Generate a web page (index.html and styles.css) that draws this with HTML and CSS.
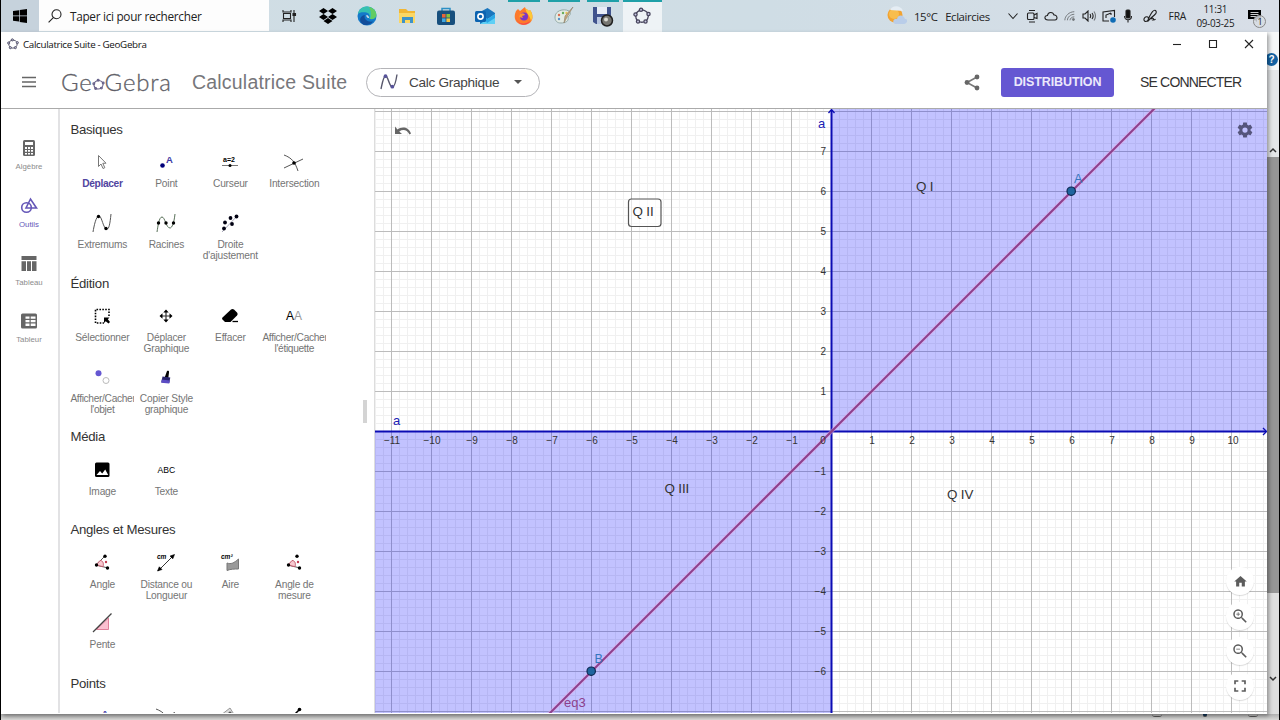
FILE: index.html
```
<!DOCTYPE html>
<html lang="fr">
  <head>
    <meta charset="utf-8">
    <title>Calculatrice Suite - GeoGebra</title>
    <link rel="stylesheet" href="styles.css">
  </head>

  <body>
    <div class="taskbar">
      <div class="start">
        <svg width="14" height="14" viewBox="0 0 14 14"><path d="M0 2l6-.8v5.3H0zM6.7 1.1L14 0v6.5H6.700zM0 7.200h6v5.300L0 11.700zM6.700 7.200H14V14l-7.300-1.100z"/></svg>
      </div>
      <div class="search">
        <svg width="14" height="14" viewBox="0 0 14 14" class="line"><circle cx="8.500" cy="5.300" r="4.500"/><path d="M5.300 8.700L.6 13.400"/></svg>
        <span>Taper ici pour rechercher</span>
      </div>

      <div class="apps">
        <div class="app">
          <svg width="16" height="16" viewBox="0 0 16 16" class="line"><path d="M2 2v2h8V2M2 14v-2h8v2M2.500 5.500h7v5h-7zM13 2v12"/><path d="M12 5.500h2.500v2H12z" fill="#222"/></svg>
        </div>
        <div class="app">
          <svg width="20" height="18" viewBox="0 0 20 18"><path d="M5.500 1L10 4 5.500 7 1 4zM14.500 1L19 4l-4.500 3L10 4zM5.500 7L10 10l-4.500 3L1 10zM14.500 7L19 10l-4.500 3L10 10zM5.500 14L10 11l4.500 3-4.500 3z"/></svg>
        </div>
        <div class="app">
          <svg width="20" height="20" viewBox="0 0 20 20">
            <circle cx="10" cy="10" r="9.500" fill="#1479c9"/>
            <path d="M1 8C2 2 7 .4 10 .5c6 .1 9.500 4.500 9.400 8.500-.2 4-5 5-7.400 3.500 2-3 0-6-4-6.300C4.500 6 2 6.500 1 8z" fill="#35c1b1"/>
            <path d="M12 1c5 1 7.500 5 7.300 8-.2 3.500-4 4.500-6.300 3.800 2-3 1-8-1-11.800z" fill="#62cc62"/>
            <path d="M8 9c-1.500 3 1 7.500 8 6.500-3 4-9 5-12 1-2-3-.5-7 4-7.500z" fill="#124e9b"/>
            <path d="M12 12c-1 0-3-.5-2.600-3 1.500 0 2.900 1.500 2.600 3z" fill="#d3dee4"/>
          </svg>
        </div>
        <div class="app">
          <svg width="20" height="18" viewBox="0 0 20 18"><path d="M2 2h7l2 2h7v12H2z" fill="#f2b632"/><path d="M2 6h16v10H2z" fill="#fbd764"/><path d="M5 10h11v6h-3v-3H8v3H5z" fill="#3f93c8"/></svg>
        </div>
        <div class="app">
          <svg width="20" height="20" viewBox="0 0 20 20"><path d="M6 5V2.500h8V5" fill="none" stroke="#2b8fc4" stroke-width="1.500"/><rect x="1" y="4.500" width="18" height="14.500" rx="2" fill="#174f7d"/><path d="M6 8h3.600v3.600H6z" fill="#e7643b"/><path d="M10.400 8H14v3.600h-3.600z" fill="#8cbf3b"/><path d="M6 12.400h3.600V16H6z" fill="#42a8e0"/><path d="M10.400 12.400H14V16h-3.600z" fill="#f5c445"/></svg>
        </div>
        <div class="app">
          <svg width="20" height="18" viewBox="0 0 20 18"><path d="M5 5l7.500-4L20 6v11H5z" fill="#1a75bd"/><path d="M5 17L20 7v10z" fill="#5fd0f5"/><path d="M8 9l5 3 7-5v4l-8 5z" fill="#2aa6e6"/><rect y="4" width="11" height="11" rx="1.500" fill="#0b63b0"/><circle cx="5.500" cy="9.500" r="2.600" fill="none" stroke="#fff" stroke-width="1.600"/></svg>
        </div>
        <div class="app running">
          <svg width="20" height="20" viewBox="0 0 20 20"><path d="M2 5l2-2 2 2c2-1 3-3 5-4 0 2 2 2 4 4l1-1c4 5 4 14-6 15C1 19-1 11 2 5z" fill="#fd7a2c"/><path d="M11 1c0 2 2 2 4 4l1-1c3 4 3 8 1 11-1-6-5-7-6-14z" fill="#fdc936"/><path d="M2 9c0 9 8 11 14 6-2 5-14 6-14-6z" fill="#f3335b"/><circle cx="10" cy="10.500" r="4" fill="#7b36c6"/><path d="M6 8c3-2 5 0 5 1l-3 1 1 2-4-1z" fill="#fd9a2c"/></svg>
        </div>
        <div class="app running">
          <svg width="20" height="20" viewBox="0 0 20 20"><path d="M1 11c0-6 8-9 14-6 3 3 0 5-1 6 1 4-2 6-7 6-4 0-6-2-6-6z" fill="#e3ebe5" stroke="#93aaa7"/><circle cx="5" cy="9" r="1.200" fill="#dc6c50"/><circle cx="9" cy="7" r="1.200" fill="#67ad59"/><circle cx="5" cy="13" r="1.200" fill="#5790c9"/><circle cx="12.500" cy="7" r="1.200" fill="#ecc553"/><path d="M19 1l-6 10-3 6 1-7z" fill="#c8a87b" stroke="#8c7c67" stroke-width=".6"/></svg>
        </div>
        <div class="app running">
          <svg width="22" height="21" viewBox="0 0 22 21"><path d="M1 1h4v17H4l-3-2z" fill="#40538d"/><path d="M15 1h4v17h-4z" fill="#40538d"/><path d="M5 1h10v7H5z" fill="#e8edf7"/><path d="M5 8h10v3H5z" fill="#40538d"/><path d="M5 11h9v7H5z" fill="#b9c8e1"/><circle cx="15" cy="14.500" r="5.500" fill="#757570" stroke="#202020" stroke-width="1.500"/><circle cx="14" cy="13.500" r="2" fill="#dadad2"/></svg>
        </div>
        <div class="app running current">
          <svg width="18" height="18" viewBox="0 0 18 18" class="pentagon"><path d="M8 2.800Q13 3 15.500 7 15.500 12 12.500 14.500 9 16 5 14.500 2.500 12 2.500 7.500 4 4 8 2.800z"/><circle cx="8" cy="2.800" r="1.600"/><circle cx="15.500" cy="7" r="1.600"/><circle cx="12.500" cy="14.500" r="1.600"/><circle cx="5" cy="14.500" r="1.600"/><circle cx="2.500" cy="7.500" r="1.600"/></svg>
        </div>
      </div>

      <div class="tray">
        <svg class="weather" width="20" height="20" viewBox="0 0 20 20"><circle cx="8" cy="9" r="7.500" fill="#f2a332"/><circle cx="7" cy="8" r="5" fill="#f8bd4d"/><path d="M8 18c-4-3 0-6 2-5 1-5 7-4 8 0 4 0 2 5-1 5z" fill="#b9cde9"/><path d="M3 4c2-5 11-5 13 1z" fill="#e5edf4"/></svg>
        <span class="meteo">15°C&nbsp;&nbsp; Eclaircies</span>
        <div class="tray-icon"><svg width="12" height="12" viewBox="0 0 12 12" class="line"><path d="M1.500 3.500L6 8.500l4.500-5"/></svg></div>
        <div class="tray-icon"><svg width="12" height="14" viewBox="0 0 12 14" class="line"><rect x="1.500" y="4" width="6.500" height="6.500" rx="1"/><path d="M8 6l3-1.500v5L8 8.500M3 1.500h6M3 13h6"/></svg></div>
        <div class="tray-icon"><svg width="14" height="12" viewBox="0 0 14 12" class="line"><path d="M4 10C0 10 0 5.500 3.500 5.500 4 1.500 9 1.500 10 5c3.500-.5 4 5 1 5z"/></svg></div>
        <div class="tray-icon"><svg width="12" height="12" viewBox="0 0 14 12" class="line faded"><path d="M1 11C1 6 6 1 12 1M4 11c0-4 4-7 8-7M7 11c0-2 2-4 5-4"/><circle cx="11" cy="10" r="1.200" fill="#222"/></svg></div>
        <div class="tray-icon"><svg width="14" height="12" viewBox="0 0 14 12" class="line"><path d="M1 4h2l3-3v10L3 8H1zM8 4c1 1.500 1 2.500 0 4M10 3c1.500 2 1.500 4 0 6"/><path d="M12 1.500c2 3 2 6 0 9" class="faded"/></svg></div>
        <div class="tray-icon"><svg width="14" height="14" viewBox="0 0 14 14" class="line"><path d="M12.500 8V1.500L1 3v9h6M4 9V6l5-2M9 4v2"/><circle cx="11" cy="11" r="2.800" fill="#0f6cb5" stroke="none"/></svg></div>
        <div class="tray-icon"><svg width="12" height="14" viewBox="0 0 12 14" class="line"><rect x="4" y="1" width="4" height="8" rx="1" fill="#111"/><path d="M2.500 7c0 5 7 5 7 0M6 11v2.500"/></svg></div>
        <div class="tray-icon pen"><svg width="14" height="14" viewBox="0 0 14 14" class="line"><path d="M12.500 1.500c-2-1-4 2-6 6l-2 5 4-4c4-3 6-5 4-7zM5 8C2 7 0 10 1.500 12c2 1.500 5-1 3.500-4M8 10c2-2 3 0 2 1 1 0 2 0 2.500-1"/></svg></div>
        <span class="lang">FRA</span>
        <div class="clock">11:31<br>09-03-25</div>
        <div class="notif">
          <svg width="14" height="13" viewBox="0 0 14 13"><path d="M0 0h13v9H9v3L6 9H0z"/><path d="M2.500 2.500h8M2.500 4.500h8M2.500 6.500h6" stroke="#fff" stroke-width=".8"/></svg>
          <span class="badge">1</span>
        </div>
      </div>
    </div>

    <div class="desktop">
      <div class="window">
        <div class="titlebar">
          <svg width="12" height="12" viewBox="0 0 18 18" class="pentagon"><path d="M8 2.800Q13 3 15.500 7 15.500 12 12.500 14.500 9 16 5 14.500 2.500 12 2.500 7.500 4 4 8 2.800z"/><circle cx="8" cy="2.800" r="1.600"/><circle cx="15.500" cy="7" r="1.600"/><circle cx="12.500" cy="14.500" r="1.600"/><circle cx="5" cy="14.500" r="1.600"/><circle cx="2.500" cy="7.500" r="1.600"/></svg>
          <span class="caption">Calculatrice Suite - GeoGebra</span>
          <div class="controls">
            <svg width="10" height="10" viewBox="0 0 10 10" class="line"><path d="M1 5.500h8"/></svg>
            <svg width="10" height="10" viewBox="0 0 10 10" class="line"><path d="M1.500 1.500h7v7h-7z"/></svg>
            <svg width="10" height="10" viewBox="0 0 10 10" class="line"><path d="M1 1l8 8M9 1L1 9"/></svg>
          </div>
        </div>

        <div class="header">
          <svg class="burger" width="16" height="12" viewBox="0 0 16 12"><path d="M1 1.500h14M1 6h14M1 10.500h14"/></svg>
          <div class="logo">
            <span>Ge</span>
            <svg width="13" height="13" viewBox="0 0 18 18"><path d="M8.500 3Q13 3.500 15.500 7 15.500 12 13 14 9 16 5 14.500 2.500 12 2.500 8 4 4.500 8.500 3z"/><circle cx="8.500" cy="3" r="1.300"/><circle cx="15.500" cy="7" r="1.300"/><circle cx="13" cy="14" r="1.300"/><circle cx="5" cy="14.500" r="1.300"/><circle cx="2.500" cy="8" r="1.300"/></svg>
            <span>Gebra</span>
          </div>
          <span class="suite">Calculatrice Suite</span>
          <div class="picker">
            <svg width="18" height="18" viewBox="0 0 18 18"><path d="M1 16C2.500 9 3.500 3 5.500 3c3 0 3.500 11 7 11C15 14 16 8 17 1.500" class="curve"/><circle cx="5.500" cy="3.200" r="1.900"/><circle cx="12.300" cy="13.700" r="1.900"/></svg>
            <span>Calc Graphique</span>
            <i class="caret"></i>
          </div>
          <svg class="share" width="16" height="17" viewBox="0 0 16 17"><path d="M13 3L3 8.500l10 5.500" fill="none" stroke="#777" stroke-width="1.600"/><circle cx="13" cy="3" r="2.400"/><circle cx="3" cy="8.500" r="2.400"/><circle cx="13" cy="14" r="2.400"/></svg>
          <div class="btn-share"><span>DISTRIBUTION</span></div>
          <div class="signin">SE CONNECTER</div>
        </div>

        <div class="main">
          <div class="rail">
            <div class="rail-item">
              <svg width="18" height="18" viewBox="0 0 18 18"><rect x="3" y="1" width="12" height="16" rx="1.500" fill="#666"/><path d="M5 3h8v3H5z" fill="#fff"/><path d="M5 8h2v2H5zM8 8h2v2H8zM11 8h2v2h-2zM5 11h2v1.800H5zM8 11h2v1.800H8zM11 11h2v1.800h-2zM5 14h2v1.500H5zM8 14h2v1.500H8zM11 14h2v1.500h-2z" fill="#fff"/></svg>
              <span>Algèbre</span>
            </div>
            <div class="rail-item active">
              <svg width="18" height="18" viewBox="0 0 18 18"><g fill="none" stroke="#6557b8" stroke-width="1.600"><circle cx="6.500" cy="10.500" r="4.800"/><path d="M10.500 2L6 11h10.500z"/></g></svg>
              <span>Outils</span>
            </div>
            <div class="rail-item">
              <svg width="18" height="18" viewBox="0 0 18 18"><path d="M1.500 1h15v4h-15zM1.500 6.200H6V16H1.500zM7 6.200h4V16H7zM12 6.200h4.500V16H12z" fill="#666"/></svg>
              <span>Tableau</span>
            </div>
            <div class="rail-item">
              <svg width="18" height="18" viewBox="0 0 18 18"><rect x="1" y="1.500" width="16" height="15" rx="1.500" fill="#666"/><path d="M5.500 4.500h4v2.200h-4zM10.700 4.500h4.800v2.200h-4.800zM5.500 8h4v2.200h-4zM10.700 8h4.800v2.200h-4.800zM5.500 11.500h4v2.500h-4zM10.700 11.500h4.800v2.500h-4.800z" fill="#fff"/></svg>
              <span>Tableur</span>
            </div>
          </div>

          <div class="tools">
            <div class="category">
              <h2>Basiques</h2>
              <div class="grid">
                <div class="tool selected">
                  <svg viewBox="0 0 32 32"><path d="M12.500 9.500v11l2.500-2.500 2 4.500 1.800-.8-2-4.400 3.200-.1z" fill="#fff" stroke="#777"/></svg>
                  <span>Déplacer</span>
                </div>
                <div class="tool">
                  <svg viewBox="0 0 32 32"><circle cx="12.500" cy="19.500" r="2.300" fill="#00007a"/><text x="16" y="17" class="t-letter">A</text></svg>
                  <span>Point</span>
                </div>
                <div class="tool">
                  <svg viewBox="0 0 32 32"><text x="9" y="16" class="t-tiny">a=2</text><path d="M8 19.500h16" stroke="#777"/><circle cx="16" cy="19.500" r="1.500"/></svg>
                  <span>Curseur</span>
                </div>
                <div class="tool">
                  <svg viewBox="0 0 32 32"><path d="M6 9c8 3 11 7 14 16M6 22l19-9" fill="none" stroke="#555"/><circle cx="16" cy="17" r="1.800"/></svg>
                  <span>Intersection</span>
                </div>
                <div class="tool">
                  <svg viewBox="0 0 32 32"><path d="M7 25c1-6 3-16 6-16s4 13 8 13c2 0 3-5 4-15" fill="none" stroke="#555"/><circle cx="12.500" cy="9.500" r="1.700"/><circle cx="20" cy="21.500" r="1.700"/></svg>
                  <span>Extremums</span>
                </div>
                <div class="tool">
                  <svg viewBox="0 0 32 32"><path d="M7 25c1-6 2-15 5-15s4 11 8 11c2 0 4-5 5-14" fill="none" stroke="#587058"/><circle cx="8.500" cy="16" r="1.700"/><circle cx="16" cy="16" r="1.700"/><circle cx="23.500" cy="16" r="1.700"/></svg>
                  <span>Racines</span>
                </div>
                <div class="tool">
                  <svg viewBox="0 0 32 32"><path d="M8 25L24 8" stroke="#aab"/><g fill="#001"><circle cx="10" cy="21.500" r="1.900"/><circle cx="11" cy="15.500" r="1.900"/><circle cx="16.500" cy="11" r="1.900"/><circle cx="18" cy="17" r="1.900"/><circle cx="22.500" cy="9.500" r="1.900"/></g></svg>
                  <span>Droite d'ajustement</span>
                </div>
              </div>
            </div>

            <div class="category">
              <h2>Édition</h2>
              <div class="grid">
                <div class="tool">
                  <svg viewBox="0 0 32 32"><path d="M23 16V9.500H9.500v13.500H18" fill="none" stroke="#000" stroke-width="1.600" stroke-dasharray="1.600 1.300"/><path d="M18 17.500h5.500l-1.700 1.700 2.200 2.800-1.500 1.500-2.800-2.200-1.700 1.700z"/></svg>
                  <span>Sélectionner</span>
                </div>
                <div class="tool">
                  <svg viewBox="0 0 32 32"><path d="M16 11v10M11 16h10" stroke="#333" stroke-width="1.200"/><path d="M16 9.500l2.700 3h-5.400zM16 22.500l2.700-3h-5.400zM9.500 16l3-2.700v5.400zM22.500 16l-3-2.700v5.400z"/></svg>
                  <span>Déplacer Graphique</span>
                </div>
                <div class="tool">
                  <svg viewBox="0 0 32 32"><path d="M8.500 17.500l8.500-8c1-.8 2-.8 3 0l3 3c.8 1 .8 2 0 3l-6.500 6.500H11l-2.500-2.500c-.6-.7-.6-1.300 0-2z"/><path d="M18.500 21.500H24" stroke="#000" stroke-width="1.300"/></svg>
                  <span>Effacer</span>
                </div>
                <div class="tool">
                  <svg viewBox="0 0 32 32"><text x="8" y="20" class="t-aa">A<tspan fill="#999">A</tspan></text></svg>
                  <span class="wide">Afficher/Cacher l'étiquette</span>
                </div>
                <div class="tool">
                  <svg viewBox="0 0 32 32"><circle cx="12.500" cy="12.300" r="3" fill="#6557d2"/><circle cx="20" cy="19.500" r="3" fill="#fff" stroke="#bbb"/></svg>
                  <span class="wide">Afficher/Cacher l'objet</span>
                </div>
                <div class="tool">
                  <svg viewBox="0 0 32 32"><path d="M17 10c1.500-.6 2.300 0 2 1.500l-.7 5.500h-3.800z"/><path d="M12.500 15.500l7.800 1-1 5.500-8-.8z" fill="#27236c"/><path d="M11.800 18.500l8 1-.6 3-8-.8z" fill="#5c4cc4"/></svg>
                  <span>Copier Style graphique</span>
                </div>
              </div>
            </div>

            <div class="category">
              <h2>Média</h2>
              <div class="grid">
                <div class="tool">
                  <svg viewBox="0 0 32 32"><rect x="9" y="8.500" width="14.500" height="14.500" rx="1.500"/><path d="M10.500 21l3.500-4 2.200 2.400 3-3.900 3 5.500z" fill="#fff"/></svg>
                  <span>Image</span>
                </div>
                <div class="tool">
                  <svg viewBox="0 0 32 32"><text x="7.500" y="19" class="t-abc">ABC</text></svg>
                  <span>Texte</span>
                </div>
              </div>
            </div>

            <div class="category">
              <h2>Angles et Mesures</h2>
              <div class="grid">
                <div class="tool">
                  <svg viewBox="0 0 32 32"><path d="M19 9L10 18l12 3" fill="none" stroke="#555"/><path d="M14 13.500c3 0 4 3 3 6.200L10 18z" fill="#f8c9d0" stroke="#c05a6c"/><circle cx="19" cy="9.200" r="1.700"/><circle cx="10.500" cy="18" r="1.700"/><circle cx="21.500" cy="21" r="1.700"/><circle cx="20" cy="15" r="1.200" fill="#c33b50"/></svg>
                  <span>Angle</span>
                </div>
                <div class="tool">
                  <svg viewBox="0 0 32 32"><text x="7" y="11.500" class="t-cm">cm</text><path d="M8 24L24 8" stroke="#333"/><path d="M24.500 7.500l-1.700 4.300-2.800-2.700zM7.500 24l4.500-1.500-2.700-2.700z" stroke="#000" stroke-width=".6"/></svg>
                  <span>Distance ou Longueur</span>
                </div>
                <div class="tool">
                  <svg viewBox="0 0 32 32"><text x="7" y="11.500" class="t-cm">cm²</text><path d="M13 16c4 1.500 7 0 11.500-4v10c-4 0-8 0-11.500 1.500z" fill="#999" stroke="#777"/></svg>
                  <span>Aire</span>
                </div>
                <div class="tool">
                  <svg viewBox="0 0 32 32"><path d="M10 18l12 3" stroke="#555"/><path d="M14 13.500c3 0 4 3 3 6.200L10 18z" fill="#f8c9d0" stroke="#c05a6c"/><circle cx="19" cy="9.200" r="1.700"/><circle cx="10.500" cy="18" r="1.700"/><circle cx="21.500" cy="21" r="1.700"/><circle cx="20" cy="15" r="1.200" fill="#c33b50"/></svg>
                  <span>Angle de mesure</span>
                </div>
                <div class="tool">
                  <svg viewBox="0 0 32 32"><path d="M22.500 11v11.500H10.500z" fill="#fbc0d0" stroke="#e0809a"/><path d="M7 25L25.500 6.500" stroke="#444" stroke-width="1.200"/></svg>
                  <span>Pente</span>
                </div>
              </div>
            </div>

            <div class="category">
              <h2>Points</h2>
              <div class="grid">
                <div class="tool">
                  <svg viewBox="0 0 32 32"><text x="15.500" y="17" class="t-letter">A</text></svg>
                </div>
                <div class="tool">
                  <svg viewBox="0 0 32 32"><path d="M6 9c8 3 11 7 14 16M14 17l11-4.500" fill="none" stroke="#555"/></svg>
                </div>
                <div class="tool">
                  <svg viewBox="0 0 32 32"><path d="M7 15l9-7 5 8-8 7z" fill="#ddd" stroke="#999"/><circle cx="16" cy="13" r="1.600" fill="#555"/></svg>
                </div>
                <div class="tool">
                  <svg viewBox="0 0 32 32"><path d="M10 21l11-11" stroke="#000" stroke-width="1.500"/><circle cx="21.500" cy="9.500" r="1.800"/></svg>
                </div>
              </div>
            </div>
            <div class="thumb"></div>
          </div>

          <div class="graph">
            <!-- drawn in window coordinates, one unit = 40px, origin at 831.5 431.5 -->
            <svg class="plane" width="892" height="604" viewBox="375 109 892 604">
              <defs>
                <pattern id="minor" x="831" y="431" width="8" height="8" patternUnits="userSpaceOnUse">
                  <path d="M.5 0v8M0 .5h8" stroke="#f0f0f0"/>
                </pattern>
                <pattern id="major" x="831" y="431" width="40" height="40" patternUnits="userSpaceOnUse">
                  <path d="M.5 0v40M0 .5h40" stroke="#bcbcbc"/>
                </pattern>
              </defs>
              <rect x="375" y="109" width="892" height="604" fill="#fff"/>
              <rect x="375" y="109" width="892" height="604" fill="url(#minor)"/>
              <rect x="375" y="109" width="892" height="604" fill="url(#major)"/>
              <path class="region" d="M831.500 109H1267v322.500H831.500zM375 431.500h456.500V713H375z"/>

              <path class="axis" d="M375 431.500h891M831.500 713V110"/>
              <path class="arrow" d="M1263 428l3.500 3.500-3.500 3.500M828.500 113l3-3.500 3 3.500"/>

              <path class="eq-halo" d="M549 714L1155 108"/>
              <path class="eq" d="M549 714L1155 108"/>

              <g class="ticks">
                <text x="392" y="444">−11</text>
                <text x="432" y="444">−10</text>
                <text x="472" y="444">−9</text>
                <text x="512" y="444">−8</text>
                <text x="552" y="444">−7</text>
                <text x="592" y="444">−6</text>
                <text x="632" y="444">−5</text>
                <text x="672" y="444">−4</text>
                <text x="712" y="444">−3</text>
                <text x="752" y="444">−2</text>
                <text x="792" y="444">−1</text>
                <text x="823" y="444">0</text>
                <text x="872" y="444">1</text>
                <text x="912" y="444">2</text>
                <text x="952" y="444">3</text>
                <text x="992" y="444">4</text>
                <text x="1032" y="444">5</text>
                <text x="1072" y="444">6</text>
                <text x="1112" y="444">7</text>
                <text x="1152" y="444">8</text>
                <text x="1192" y="444">9</text>
                <text x="1233" y="444">10</text>
              </g>
              <g class="ticks vertical">
                <text x="826" y="155">7</text>
                <text x="826" y="195">6</text>
                <text x="826" y="235">5</text>
                <text x="826" y="275">4</text>
                <text x="826" y="315">3</text>
                <text x="826" y="355">2</text>
                <text x="826" y="395">1</text>
                <text x="826" y="475">−1</text>
                <text x="826" y="515">−2</text>
                <text x="826" y="555">−3</text>
                <text x="826" y="595">−4</text>
                <text x="826" y="635">−5</text>
                <text x="826" y="675">−6</text>
              </g>

              <text x="818" y="127.500" class="axis-name">a</text>
              <text x="393" y="425" class="axis-name">a</text>

              <circle cx="1071.200" cy="191.200" r="4.200" class="pt"/>
              <text x="1074" y="183" class="pt-name">A</text>
              <circle cx="591.200" cy="671.200" r="4.200" class="pt"/>
              <text x="594.500" y="663" class="pt-name">B</text>
              <text x="564" y="707" class="eq-name">eq3</text>

              <text x="916" y="191" class="quad">Q I</text>
              <rect x="628.500" y="199" width="32.500" height="27.500" rx="3" class="quad-box"/>
              <text x="632.500" y="216" class="quad">Q II</text>
              <text x="664.500" y="493" class="quad">Q III</text>
              <text x="947" y="499" class="quad">Q IV</text>
            </svg>

            <svg class="undo" width="18" height="10" viewBox="0 0 18 10"><path d="M1 .5v7.500h7L5.200 5.400C9 3 13 3.500 15.500 8.500L17 7.500C14.500.8 8 .2 3.500 3.500z"/></svg>
            <svg class="gear" width="18" height="18" viewBox="0 0 24 24"><path d="M19.430 12.980c.04-.32.070-.64.070-.98s-.03-.66-.07-.98l2.110-1.650c.19-.15.240-.42.120-.64l-2-3.460c-.12-.22-.39-.3-.61-.22l-2.490 1c-.52-.4-1.080-.73-1.690-.98l-.38-2.650C14.460 2.180 14.250 2 14 2h-4c-.25 0-.46.180-.49.420l-.38 2.650c-.61.250-1.170.590-1.690.980l-2.490-1c-.23-.09-.49 0-.61.220l-2 3.460c-.13.220-.07.490.120.640l2.110 1.650c-.04.320-.07.650-.07.980s.03.660.070.980l-2.110 1.650c-.19.150-.24.420-.12.640l2 3.460c.12.220.390.300.610.220l2.490-1c.52.400 1.080.730 1.690.980l.38 2.650c.03.240.240.420.490.420h4c.25 0 .46-.18.490-.42l.38-2.650c.61-.25 1.170-.59 1.690-.98l2.490 1c.23.090.49 0 .61-.22l2-3.460c.12-.22.070-.49-.12-.64zM12 15.500A3.500 3.500 0 1 1 12 8.500a3.500 3.500 0 0 1 0 7z"/></svg>

            <div class="zoom-panel">
              <div class="zoom"><svg width="15" height="15" viewBox="0 0 24 24"><path d="M10 20v-6h4v6h5v-8h3L12 3 2 12h3v8z"/></svg></div>
              <div class="zoom"><svg width="18" height="18" viewBox="0 0 24 24"><path d="M15.500 14h-.79l-.28-.27A6.500 6.500 0 1 0 13.730 14.430l.27.280v.79l5.500 5.500 1.500-1.500zM9.500 14a4.500 4.500 0 1 1 0-9 4.500 4.500 0 0 1 0 9zM12 10h-2v2H9v-2H7V9h2V7h1v2h2z"/></svg></div>
              <div class="zoom"><svg width="18" height="18" viewBox="0 0 24 24"><path d="M15.500 14h-.79l-.28-.27A6.500 6.500 0 1 0 13.730 14.430l.27.280v.79l5.500 5.500 1.500-1.500zM9.500 14a4.500 4.500 0 1 1 0-9 4.500 4.500 0 0 1 0 9zM7 9h5v1H7z"/></svg></div>
              <div class="zoom"><svg width="20" height="20" viewBox="0 0 24 24"><path d="M7 14H5v5h5v-2H7zM5 10h2V7h3V5H5zM17 17h-3v2h5v-5h-2zM14 5v2h3v3h2V5z"/></svg></div>
            </div>
          </div>
        </div>
      </div>

      <!-- edge of the window lying behind -->
      <div class="behind">
        <div class="help"><span>?</span></div>
        <div class="track-top"><svg width="8" height="6" viewBox="0 0 8 6"><path d="M1 5l3-3 3 3"/></svg></div>
        <div class="track-thumb"></div>
        <div class="track-bottom"><svg width="8" height="6" viewBox="0 0 8 6"><path d="M1 1l3 3 3-3"/></svg></div>
      </div>
    </div>
    <div class="footer">
      <i class="bump"></i><i class="bump dark"></i><i class="bump"></i>
    </div>
  </body>
</html>
```

FILE: styles.css
```
* {
  box-sizing: border-box;
}

body {
  margin: 0;
  width: 1280px;
  height: 720px;
  overflow: hidden;
  display: flex;
  flex-direction: column;
  background: #dcdcdc;
  border-left: 1px solid #000;
  border-right: 1px solid #000;
  font-family: "Liberation Sans", Arial, sans-serif;
  color: #333;
}

svg {
  display: block;
  flex: none;
}

.line {
  fill: none;
  stroke: #222;
  stroke-width: 1.1;
}

.faded {
  opacity: 0.55;
}

.pentagon {
  fill: none;
  stroke: #47455c;
  stroke-width: 1.3;
}

.pentagon circle {
  fill: #c9c9e4;
}

/* taskbar */

.taskbar {
  display: flex;
  height: 32px;
  flex: none;
  background: linear-gradient(90deg, #d0dde4, #cfdde5 60%, #d8dee7);
  font-family: "Open Sans", "Noto Sans", sans-serif;
  color: #222;
}

.start {
  width: 38px;
  display: flex;
  align-items: center;
  justify-content: center;
  background: #c6d2dc;
}

.search {
  width: 230px;
  height: 31px;
  display: flex;
  align-items: center;
  gap: 8px;
  padding-left: 9px;
  background: #fdfdfd;
  font-size: 11.8px;
  letter-spacing: -0.3px;
  white-space: nowrap;
}

.apps {
  display: flex;
}

.app {
  width: 39.3px;
  display: flex;
  align-items: center;
  justify-content: center;
}

.running {
  background: linear-gradient(#1fa0a8, #1fa0a8) center top / 32px 2px no-repeat;
}

.current {
  background: linear-gradient(#1fa0a8, #1fa0a8) center top / 100% 2px no-repeat, #eef3f6;
}

.tray {
  display: flex;
  align-items: center;
  margin-left: auto;
  width: 392px;
  font-size: 11.4px;
  letter-spacing: -0.4px;
}

.meteo {
  width: 83px;
  margin-left: 7px;
  flex: none;
  white-space: nowrap;
}

.weather + .meteo + .tray-icon {
  margin-left: 6px;
}

.tray-icon {
  width: 19.2px;
  display: flex;
  justify-content: center;
}

.pen {
  width: 26px;
}

.lang {
  width: 28px;
  text-align: center;
  font-size: 10.3px;
  letter-spacing: -0.2px;
}

.clock {
  width: 48px;
  text-align: center;
  font-size: 9.9px;
  letter-spacing: -0.3px;
  line-height: 14px;
}

.notif {
  position: relative;
  width: 34px;
  padding-left: 9px;
}

.badge {
  position: absolute;
  left: 14px;
  top: 5px;
  width: 13px;
  height: 13px;
  border: 1px solid #888;
  border-radius: 50%;
  background: rgba(215, 220, 226, 0.85);
  font-size: 9px;
  line-height: 11px;
  text-align: center;
}

/* window */

.desktop {
  display: flex;
  height: 682px;
  flex: none;
}

.window {
  width: 1266px;
  flex: none;
  display: flex;
  flex-direction: column;
  background: #fff;
  z-index: 1;
  box-shadow: 2px 2px 4px rgba(0, 0, 0, 0.35);
}

.titlebar {
  height: 24px;
  display: flex;
  align-items: center;
  padding-left: 6px;
  font-family: "Open Sans", "Noto Sans", sans-serif;
  font-size: 9.8px;
  letter-spacing: -0.33px;
  color: #111;
}

.caption {
  margin-left: 4px;
}

.controls {
  display: flex;
  gap: 26px;
  margin-left: auto;
  padding-right: 13px;
}

.header {
  height: 53px;
  flex: none;
  display: flex;
  align-items: center;
  padding-left: 20px;
  border-bottom: 1px solid #aaa;
}

.burger {
  stroke: #666;
  stroke-width: 1.3;
}

.logo {
  display: flex;
  align-items: center;
  width: 113px;
  margin-left: 24px;
  font-family: Lato, "Liberation Sans", sans-serif;
  font-weight: 300;
  font-size: 24px;
  line-height: 28px;
  letter-spacing: 0.8px;
  -webkit-text-stroke: 0.3px #5f5f68;
  color: #5f5f68;
}

.logo svg {
  fill: none;
  stroke: #66618a;
  stroke-width: 1.5;
  margin: 5px 0 0 -1px;
}

.suite {
  width: 174px;
  margin-left: 18px;
  font-size: 19.5px;
  letter-spacing: 0.2px;
  color: #77777b;
  white-space: nowrap;
}

.picker {
  width: 174px;
  height: 29px;
  display: flex;
  align-items: center;
  padding-left: 13px;
  border: 1px solid #b4b4b8;
  border-radius: 15px;
  font-size: 13.6px;
  letter-spacing: -0.3px;
  color: #444;
}

.picker svg {
  fill: #57539a;
  margin-right: 11px;
}

.picker .curve {
  fill: none;
  stroke: #57576c;
  stroke-width: 1.4;
}

.caret {
  margin-left: 15px;
  border: 4px solid transparent;
  border-top-color: #555;
  border-bottom: 0;
}

.share {
  margin-left: auto;
  fill: #666;
}

.btn-share {
  width: 113px;
  height: 29px;
  margin-left: 21px;
  display: flex;
  align-items: center;
  justify-content: center;
  border-radius: 3px;
  background: #6557d2;
  color: #ece9fb;
  font-size: 12.5px;
  font-weight: bold;
}

.btn-share span {
  letter-spacing: -0.1px;
}

.signin {
  width: 127px;
  margin-left: 26px;
  font-size: 14px;
  letter-spacing: -0.82px;
  white-space: nowrap;
}

.main {
  height: 605px;
  display: flex;
}

.rail {
  width: 57px;
  padding-top: 30px;
}

.rail-item {
  height: 57.8px;
  display: flex;
  flex-direction: column;
  align-items: center;
  gap: 5px;
  padding-right: 1px;
  font-size: 7.8px;
  line-height: 10px;
  color: #8c8c8c;
}

.active {
  color: #6557b8;
}

/* tools */

.tools {
  position: relative;
  width: 317px;
  height: 604px;
  overflow: hidden;
  padding: 5px 0 0 10.4px;
  border-left: 2px solid #e2e2e4;
  border-right: 1px solid #ddd;
}

.category h2 {
  height: 32.4px;
  margin: 0;
  font-size: 13.2px;
  letter-spacing: -0.25px;
  font-weight: normal;
  line-height: 32px;
}

.grid {
  display: grid;
  grid-template-columns: repeat(4, 64px);
  grid-auto-rows: 60.6px;
}

.tool {
  overflow: hidden;
  font-size: 10.2px;
  letter-spacing: -0.2px;
  line-height: 11.2px;
  text-align: center;
  color: #757575;
}

.tool svg {
  width: 32px;
  height: 32px;
  margin: 0 auto;
  letter-spacing: 0;
}

.tool span {
  display: block;
}

.tool .wide {
  letter-spacing: -0.33px;
}

.selected span {
  font-weight: bold;
  letter-spacing: -0.35px;
  color: #5145a0;
}

.t-letter {
  font-size: 9.5px;
  font-weight: bold;
  fill: #3a37a4;
}

.t-tiny {
  font-size: 7px;
  font-weight: bold;
}

.t-aa {
  font-size: 12px;
}

.t-abc {
  font-size: 8.6px;
}

.t-cm {
  font-size: 6.5px;
  font-style: italic;
  font-weight: bold;
}

.thumb {
  position: absolute;
  right: 7px;
  top: 291px;
  width: 4px;
  height: 23px;
  background: #d4d4d4;
}

/* graph */

.graph {
  position: relative;
  width: 892px;
  height: 604px;
}

.region {
  fill: #0000ff;
  fill-opacity: 0.24;
}

.axis {
  stroke: #0c0cb4;
  stroke-width: 2;
}

.arrow {
  fill: none;
  stroke: #0c0cb4;
  stroke-width: 1.3;
}

.eq {
  stroke: #8d3f8c;
  stroke-width: 2;
}

.eq-halo {
  stroke: #e8a8e4;
  stroke-opacity: 0.5;
  stroke-width: 4;
}

.ticks {
  font-size: 10px;
  text-anchor: middle;
  fill: #333;
}

.vertical {
  text-anchor: end;
}

.axis-name {
  font-size: 13px;
  fill: #2020b4;
}

.pt {
  fill: #1f659f;
  stroke: #0c2750;
  stroke-width: 1.2;
}

.pt-name {
  font-size: 12.5px;
  fill: #3676be;
}

.eq-name {
  font-size: 13px;
  fill: #8d3f8c;
}

.quad {
  font-size: 13.4px;
  letter-spacing: -0.15px;
  fill: #333;
}

.quad-box {
  fill: #fff;
  fill-opacity: 0.6;
  stroke: #555;
  stroke-width: 1.2;
}

.undo {
  position: absolute;
  left: 19px;
  top: 17px;
  fill: #666;
}

.gear {
  position: absolute;
  right: 13px;
  top: 12px;
  fill: #55557c;
}

.zoom-panel {
  position: absolute;
  right: 13px;
  top: 458px;
  display: flex;
  flex-direction: column;
  gap: 7px;
}

.zoom {
  width: 28px;
  height: 28px;
  display: flex;
  align-items: center;
  justify-content: center;
  border-radius: 50%;
  background: #fff;
  box-shadow: 0 1px 1px rgba(0, 0, 0, 0.14);
  fill: #5c5c5c;
}

/* strip on the right and bottom */

.behind {
  width: 12px;
  display: flex;
  flex-direction: column;
  overflow: hidden;
  background: #e4e6e8;
  fill: none;
  stroke: #333;
  stroke-width: 1.5;
}

.help {
  height: 38px;
  padding-top: 21px;
  background: #f5f7f8;
}

.help span {
  display: block;
  width: 13px;
  height: 13px;
  margin-left: -2px;
  border-radius: 50%;
  background: #1563a4;
  color: #fff;
  font-size: 10px;
  font-weight: bold;
  line-height: 13px;
  text-align: center;
}

.track-top {
  height: 87px;
  padding: 77px 0 0 2px;
}

.track-thumb {
  height: 436px;
  background: #969696;
}

.track-bottom {
  height: 121px;
  padding: 83px 0 0 2px;
  background: #dedede;
}

.footer {
  height: 6px;
  display: flex;
  background: linear-gradient(#b0b0b0, #d8d8d6);
  padding-left: 1151px;
  gap: 41px;
}

.bump {
  width: 10px;
  height: 3px;
  border-bottom: 1px solid #555;
  border-radius: 0 0 5px 5px;
}

.dark {
  width: 4px;
  background: #135;
}
```
